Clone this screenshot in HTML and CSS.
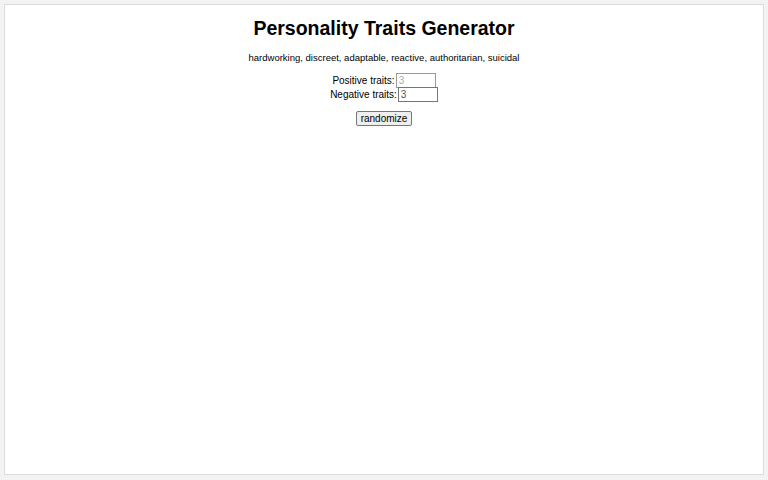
FILE: index.html
```html
<!DOCTYPE html>
<html>
<head>
<meta charset="utf-8">
<title>Personality Traits Generator</title>
<link rel="stylesheet" href="styles.css">
</head>
<body>
<div class="panel">
  <h1 class="title">Personality Traits Generator</h1>
  <p class="traits">hardworking, discreet, adaptable, reactive, authoritarian, suicidal</p>
  <div class="form">
    <div class="row"><label>Positive traits:</label><input class="num num-light" type="text" placeholder="3"></div>
    <div class="row"><label>Negative traits:</label><input class="num" type="text" value="3"></div>
    <button class="btn">randomize</button>
  </div>
</div>
</body>
</html>
```
FILE: styles.css
```css
html, body { margin: 0; padding: 0; }
body {
  background: #f3f3f3;
  font-family: "Liberation Sans", Arial, sans-serif;
  padding: 4px;
  height: 480px;
  box-sizing: border-box;
}
.panel {
  background: #fff;
  border: 1px solid #dcdcdc;
  height: 471px;
  box-sizing: border-box;
  text-align: center;
  color: #000;
}
.title {
  font-size: 19.5px;
  font-weight: bold;
  margin: 11px 0 0;
  line-height: 24px;
}
.traits {
  font-size: 9.5px;
  margin: 12px 0 0;
  line-height: 12px;
}
.form {
  margin-top: 9px;
  display: flex;
  flex-direction: column;
  align-items: center;
  font-size: 10px;
}
.row {
  display: flex;
  align-items: center;
  height: 14px;
}
.row label { margin-right: 1px; }
.num {
  width: 40px;
  height: 15px;
  box-sizing: border-box;
  border: 1px solid #767676;
  padding: 0 2px;
  font-size: 10px;
  color: #555;
  font-family: "Liberation Sans", Arial, sans-serif;
}
.num-light { border-color: #9a9a9a; }
.num::placeholder { color: #aaa; }
.btn {
  margin-top: 10px;
  font-size: 10px;
  font-family: "Liberation Sans", Arial, sans-serif;
  height: 15px;
  padding: 0 4px;
  border: 1px solid #767676;
  border-radius: 2px;
  background: #efefef;
  color: #000;
}
```
